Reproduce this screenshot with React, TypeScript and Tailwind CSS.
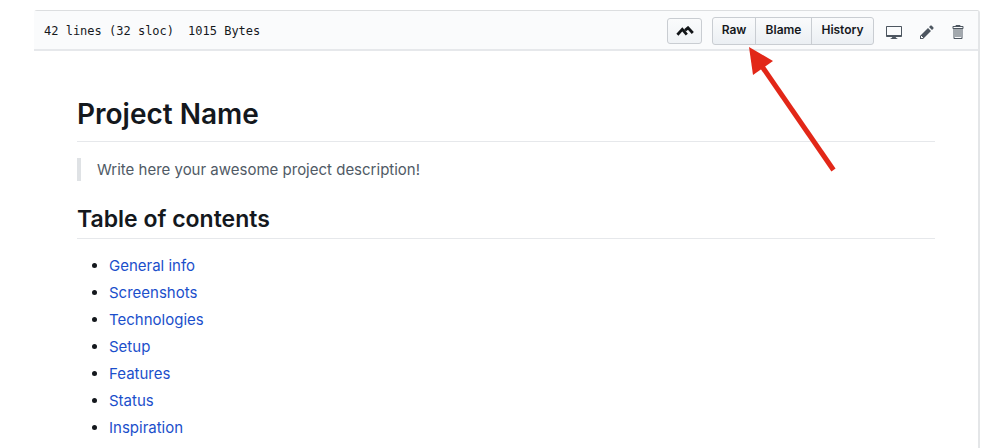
import React from "react";

const sections = [
  "General info",
  "Screenshots",
  "Technologies",
  "Setup",
  "Features",
  "Status",
  "Inspiration",
];

const groupButton =
  "h-7 border border-[#c9cdd2] bg-linear-to-b from-[#fafbfc] to-[#ebeff3] text-xs leading-4 font-semibold text-[#16191d] pb-0.5";

function Toolbar() {
  return (
    <div className="flex items-center">
      <button
        type="button"
        aria-label="Open in editor"
        className="mr-2.5 flex h-[26px] w-[35px] items-center justify-center rounded-[3px] border border-[#c9cdd2] bg-linear-to-b from-[#fafbfc] to-[#f0f3f6]"
      >
        <svg width="18" height="10" viewBox="0 0 18 10" fill="none" stroke="#111417" strokeWidth="2.8">
          <path d="M1.400 8.700 6.300 3.400l4.500 5.200" />
          <path d="M9 4.300 12 1.800l4.800 5.200" />
        </svg>
      </button>
      <div className="relative mr-3 flex">
        <button type="button" className={`${groupButton} w-11 rounded-l-[3px]`}>
          Raw
        </button>
        <button type="button" className={`${groupButton} -ml-px w-[57px]`}>
          Blame
        </button>
        <button type="button" className={`${groupButton} -ml-px w-[63px] rounded-r-[3px]`}>
          History
        </button>
        <svg
          className="pointer-events-none absolute top-7 left-9 z-10"
          width="90"
          height="130"
          viewBox="0 0 90 130"
          aria-hidden="true"
        >
          <path d="M1 2 25 16 5 30Z" fill="#e22718" />
          <path d="M13 20 85.500 125" stroke="#e22718" strokeWidth="5" />
        </svg>
      </div>
      <div className="flex items-center pt-0.5 text-[#4d5660]">
        <button type="button" aria-label="Open in desktop" className="mr-[18px]">
          <svg width="16" height="16" viewBox="0 0 16 16" fill="currentColor">
            <path d="M15 2H1c-.55 0-1 .45-1 1v9c0 .55.45 1 1 1h5.340c-.25.61-.86 1.390-2.340 2h8c-1.480-.61-2.090-1.390-2.340-2H15c.55 0 1-.45 1-1V3c0-.55-.45-1-1-1zm0 9H1V3h14v8z" />
          </svg>
        </button>
        <button type="button" aria-label="Edit file" className="mr-[18px]">
          <svg width="14" height="16" viewBox="0 0 14 16" fill="currentColor">
            <path d="M0 12v3h3l8-8-3-3-8 8zm3 2H1v-2h1v1h1v1zm10.300-9.300L12 6 9 3l1.300-1.300a.996.996 0 0 1 1.410 0l1.590 1.590c.39.39.39 1.020 0 1.410z" />
          </svg>
        </button>
        <button type="button" aria-label="Delete file">
          <svg width="12" height="16" viewBox="0.500 0 12 16" fill="currentColor">
            <path d="M11 2H9c0-.55-.45-1-1-1H5c-.55 0-1 .45-1 1H2c-.55 0-1 .45-1 1v1c0 .55.45 1 1 1v9c0 .55.45 1 1 1h7c.55 0 1-.45 1-1V5c.55 0 1-.45 1-1V3c0-.55-.45-1-1-1zm-1 12H3V5h1v8h1V5h1v8h1V5h1v8h1V5h1v9zm1-10H2V3h9v1z" />
          </svg>
        </button>
      </div>
    </div>
  );
}

export default function App() {
  return (
    <div className="h-screen overflow-hidden bg-white pt-2.5 pr-5 pl-[34px] font-['Inter',sans-serif] text-[#14181d]">
      <main className="min-h-full rounded-t-[3px] border-t border-r-2 border-t-[#dcdee0] border-r-[#e4e6e8] bg-white">
        <header className="flex h-10 items-center justify-between border-b-2 border-[#e6e8eb] bg-[#fafbfc] pt-px pr-3.5 pl-2.5">
          <div className="flex gap-3.5 font-['DejaVu_Sans_Mono',monospace] text-xs whitespace-nowrap text-[#16191d]">
            <span>42 lines (32 sloc)</span>
            <span>1015 Bytes</span>
          </div>
          <Toolbar />
        </header>
        <article className="pt-[45px] pr-[43px] pl-[43px]">
          <h1 className="border-b border-[#e6e8eb] pb-[9px] text-[28px] leading-9 font-semibold">
            Project Name
          </h1>
          <blockquote className="mt-4 border-l-4 border-[#dfe2e5] pl-4 text-[15px] leading-[23px] text-[#505a65]">
            Write here your awesome project description!
          </blockquote>
          <h2 className="mt-[22px] border-b border-[#e6e8eb] pb-[3px] text-[23px] leading-8 font-semibold">
            Table of contents
          </h2>
          <ul className="mt-[13px] list-disc pl-8 text-[15px] leading-[27px]">
            {sections.map((name) => (
              <li key={name}>
                <a href={`#${name.toLowerCase().replace(" ", "-")}`} className="text-[#1b4fcb]">
                  {name}
                </a>
              </li>
            ))}
          </ul>
        </article>
      </main>
    </div>
  );
}
